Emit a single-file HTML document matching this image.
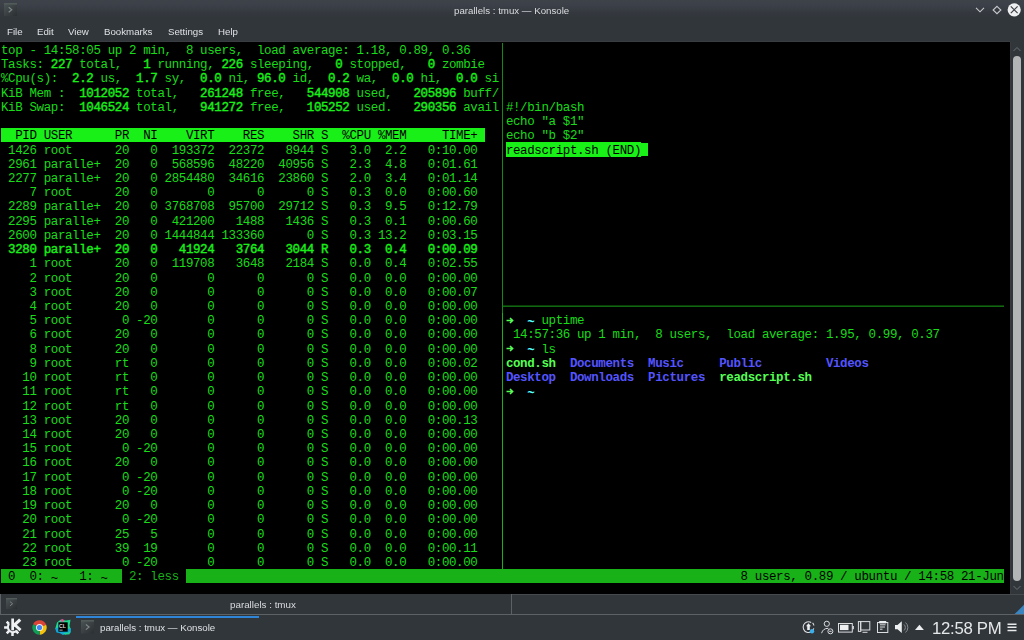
<!DOCTYPE html>
<html><head><meta charset="utf-8"><title>Konsole</title>
<style>
html,body{margin:0;padding:0;}
body{width:1024px;height:640px;overflow:hidden;position:relative;background:#31363b;font-family:"Liberation Sans",sans-serif;}
.abs{position:absolute;}
#term{position:absolute;left:0;top:42px;width:1010px;height:552px;background:#000;}
.t{position:absolute;white-space:pre;font-family:"Liberation Mono",monospace;font-size:12.5px;letter-spacing:-0.3900px;line-height:14.2222px;height:14.2222px;}
.f{color:#18dc18}
.fb{color:#18f018;-webkit-text-stroke:0.4px #18f018}
.p{color:#18dc18}
.pb{color:#18f018;-webkit-text-stroke:0.4px #18f018}
.h{color:#000}
.l{color:#18dc18}
.lh{color:#000}
.ex{color:#54ff54;font-weight:bold}
.dir{color:#5454ff;font-weight:bold}
.cy{color:#54ffff;font-weight:bold}
.sb{color:#000}
.sbt{color:#000}
.sc{color:#18b218}
.ui{position:absolute;white-space:pre;will-change:transform;color:#eff0f1;font-family:"Liberation Sans",sans-serif;}
</style></head><body>

<div class="abs" style="left:0;top:0;width:1024px;height:42px;background:linear-gradient(#3e434a 0px,#3c4048 5px,#34383e 13px,#31363b 18px)"></div>
<div class="abs" style="left:0;top:41px;width:1010px;height:1px;background:#393d42"></div>
<div class="abs" style="left:1010px;top:42px;width:1px;height:552px;background:#373b40"></div>
<div id="term"></div>
<div class="abs" style="left:1.00px;top:128.13px;width:483.55px;height:14.22px;background:#18f018"></div>
<div class="abs" style="left:505.89px;top:142.36px;width:135.11px;height:14.22px;background:#18f018"></div>
<div class="abs" style="left:641.00px;top:143.26px;width:7.11px;height:13.12px;background:#18f018"></div>
<div class="abs" style="left:1.00px;top:569.02px;width:120.89px;height:14.22px;background:#18b218"></div>
<div class="abs" style="left:185.89px;top:569.02px;width:817.78px;height:14.22px;background:#18b218"></div>
<div class="abs" style="left:502.00px;top:42.80px;width:1.00px;height:270.20px;background:#168816"></div>
<div class="abs" style="left:502.00px;top:313.00px;width:1.00px;height:256.02px;background:#18b218"></div>
<div class="abs" style="left:503.00px;top:305.00px;width:500.67px;height:1.00px;background:#0a3c0a"></div>
<div class="abs" style="left:503.00px;top:306.00px;width:500.67px;height:1.00px;background:#106810"></div>
<div class="t f" style="left:1.000px;top:44.050px">top - 14:58:05 up 2 min,  8 users,  load average: 1.18, 0.89, 0.36</div>
<div class="t f" style="left:1.000px;top:58.272px">Tasks: </div>
<div class="t fb" style="left:50.778px;top:58.272px">227</div>
<div class="t f" style="left:72.111px;top:58.272px"> total,   </div>
<div class="t fb" style="left:143.222px;top:58.272px">1</div>
<div class="t f" style="left:150.333px;top:58.272px"> running, </div>
<div class="t fb" style="left:221.444px;top:58.272px">226</div>
<div class="t f" style="left:242.777px;top:58.272px"> sleeping,   </div>
<div class="t fb" style="left:335.222px;top:58.272px">0</div>
<div class="t f" style="left:342.333px;top:58.272px"> stopped,   </div>
<div class="t fb" style="left:427.666px;top:58.272px">0</div>
<div class="t f" style="left:434.777px;top:58.272px"> zombie</div>
<div class="t f" style="left:1.000px;top:72.494px">%Cpu(s): </div>
<div class="t fb" style="left:65.000px;top:72.494px"> 2.2</div>
<div class="t f" style="left:93.444px;top:72.494px"> us, </div>
<div class="t fb" style="left:129.000px;top:72.494px"> 1.7</div>
<div class="t f" style="left:157.444px;top:72.494px"> sy, </div>
<div class="t fb" style="left:193.000px;top:72.494px"> 0.0</div>
<div class="t f" style="left:221.444px;top:72.494px"> ni, </div>
<div class="t fb" style="left:257.000px;top:72.494px">96.0</div>
<div class="t f" style="left:285.444px;top:72.494px"> id, </div>
<div class="t fb" style="left:321.000px;top:72.494px"> 0.2</div>
<div class="t f" style="left:349.444px;top:72.494px"> wa, </div>
<div class="t fb" style="left:384.999px;top:72.494px"> 0.0</div>
<div class="t f" style="left:413.444px;top:72.494px"> hi, </div>
<div class="t fb" style="left:448.999px;top:72.494px"> 0.0</div>
<div class="t f" style="left:477.444px;top:72.494px"> si</div>
<div class="t f" style="left:1.000px;top:86.717px">KiB Mem : </div>
<div class="t fb" style="left:72.111px;top:86.717px"> 1012052</div>
<div class="t f" style="left:129.000px;top:86.717px"> total, </div>
<div class="t fb" style="left:185.889px;top:86.717px">  261248</div>
<div class="t f" style="left:242.777px;top:86.717px"> free, </div>
<div class="t fb" style="left:292.555px;top:86.717px">  544908</div>
<div class="t f" style="left:349.444px;top:86.717px"> used, </div>
<div class="t fb" style="left:399.222px;top:86.717px">  205896</div>
<div class="t f" style="left:456.110px;top:86.717px"> buff/</div>
<div class="t f" style="left:1.000px;top:100.939px">KiB Swap: </div>
<div class="t fb" style="left:72.111px;top:100.939px"> 1046524</div>
<div class="t f" style="left:129.000px;top:100.939px"> total, </div>
<div class="t fb" style="left:185.889px;top:100.939px">  941272</div>
<div class="t f" style="left:242.777px;top:100.939px"> free, </div>
<div class="t fb" style="left:292.555px;top:100.939px">  105252</div>
<div class="t f" style="left:349.444px;top:100.939px"> used. </div>
<div class="t fb" style="left:399.222px;top:100.939px">  290356</div>
<div class="t f" style="left:456.110px;top:100.939px"> avail</div>
<div class="t l" style="left:505.888px;top:100.939px">#!/bin/bash</div>
<div class="t l" style="left:505.888px;top:115.161px">echo "a $1"</div>
<div class="t h" style="left:1.000px;top:129.383px">  PID USER      PR  NI    VIRT    RES    SHR S  %CPU %MEM     TIME+ </div>
<div class="t l" style="left:505.888px;top:129.383px">echo "b $2"</div>
<div class="t p" style="left:1.000px;top:143.605px"> 1426 root      20   0  193372  22372   8944 S   3.0  2.2   0:10.00</div>
<div class="t lh" style="left:505.888px;top:143.605px">readscript.sh (END)</div>
<div class="t p" style="left:1.000px;top:157.828px"> 2961 paralle+  20   0  568596  48220  40956 S   2.3  4.8   0:01.61</div>
<div class="t p" style="left:1.000px;top:172.050px"> 2277 paralle+  20   0 2854480  34616  23860 S   2.0  3.4   0:01.14</div>
<div class="t p" style="left:1.000px;top:186.272px">    7 root      20   0       0      0      0 S   0.3  0.0   0:00.60</div>
<div class="t p" style="left:1.000px;top:200.494px"> 2289 paralle+  20   0 3768708  95700  29712 S   0.3  9.5   0:12.79</div>
<div class="t p" style="left:1.000px;top:214.716px"> 2295 paralle+  20   0  421200   1488   1436 S   0.3  0.1   0:00.60</div>
<div class="t p" style="left:1.000px;top:228.939px"> 2600 paralle+  20   0 1444844 133360      0 S   0.3 13.2   0:03.15</div>
<div class="t pb" style="left:1.000px;top:243.161px"> 3280 paralle+  20   0   41924   3764   3044 R   0.3  0.4   0:00.09</div>
<div class="t p" style="left:1.000px;top:257.383px">    1 root      20   0  119708   3648   2184 S   0.0  0.4   0:02.55</div>
<div class="t p" style="left:1.000px;top:271.605px">    2 root      20   0       0      0      0 S   0.0  0.0   0:00.00</div>
<div class="t p" style="left:1.000px;top:285.827px">    3 root      20   0       0      0      0 S   0.0  0.0   0:00.07</div>
<div class="t p" style="left:1.000px;top:300.050px">    4 root      20   0       0      0      0 S   0.0  0.0   0:00.00</div>
<div class="t p" style="left:1.000px;top:314.272px">    5 root       0 -20       0      0      0 S   0.0  0.0   0:00.00</div>
<div class="t l" style="left:541.444px;top:314.272px">uptime</div>
<div class="t cy" style="left:527.221px;top:315.572px">~</div>
<div class="t p" style="left:1.000px;top:328.494px">    6 root      20   0       0      0      0 S   0.0  0.0   0:00.00</div>
<div class="t l" style="left:505.888px;top:328.494px"> 14:57:36 up 1 min,  8 users,  load average: 1.95, 0.99, 0.37</div>
<div class="t p" style="left:1.000px;top:342.716px">    8 root      20   0       0      0      0 S   0.0  0.0   0:00.00</div>
<div class="t l" style="left:541.444px;top:342.716px">ls</div>
<div class="t cy" style="left:527.221px;top:344.016px">~</div>
<div class="t p" style="left:1.000px;top:356.938px">    9 root      rt   0       0      0      0 S   0.0  0.0   0:00.02</div>
<div class="t ex" style="left:505.888px;top:356.938px">cond.sh</div>
<div class="t dir" style="left:569.888px;top:356.938px">Documents</div>
<div class="t dir" style="left:648.110px;top:356.938px">Music</div>
<div class="t dir" style="left:719.221px;top:356.938px">Public</div>
<div class="t dir" style="left:825.888px;top:356.938px">Videos</div>
<div class="t p" style="left:1.000px;top:371.161px">   10 root      rt   0       0      0      0 S   0.0  0.0   0:00.00</div>
<div class="t dir" style="left:505.888px;top:371.161px">Desktop</div>
<div class="t dir" style="left:569.888px;top:371.161px">Downloads</div>
<div class="t dir" style="left:648.110px;top:371.161px">Pictures</div>
<div class="t ex" style="left:719.221px;top:371.161px">readscript.sh</div>
<div class="t p" style="left:1.000px;top:385.383px">   11 root      rt   0       0      0      0 S   0.0  0.0   0:00.00</div>
<div class="t cy" style="left:527.221px;top:386.683px">~</div>
<div class="t p" style="left:1.000px;top:399.605px">   12 root      rt   0       0      0      0 S   0.0  0.0   0:00.00</div>
<div class="t p" style="left:1.000px;top:413.827px">   13 root      20   0       0      0      0 S   0.0  0.0   0:00.13</div>
<div class="t p" style="left:1.000px;top:428.049px">   14 root      20   0       0      0      0 S   0.0  0.0   0:00.00</div>
<div class="t p" style="left:1.000px;top:442.272px">   15 root       0 -20       0      0      0 S   0.0  0.0   0:00.00</div>
<div class="t p" style="left:1.000px;top:456.494px">   16 root      20   0       0      0      0 S   0.0  0.0   0:00.00</div>
<div class="t p" style="left:1.000px;top:470.716px">   17 root       0 -20       0      0      0 S   0.0  0.0   0:00.00</div>
<div class="t p" style="left:1.000px;top:484.938px">   18 root       0 -20       0      0      0 S   0.0  0.0   0:00.00</div>
<div class="t p" style="left:1.000px;top:499.160px">   19 root      20   0       0      0      0 S   0.0  0.0   0:00.00</div>
<div class="t p" style="left:1.000px;top:513.383px">   20 root       0 -20       0      0      0 S   0.0  0.0   0:00.00</div>
<div class="t p" style="left:1.000px;top:527.605px">   21 root      25   5       0      0      0 S   0.0  0.0   0:00.00</div>
<div class="t p" style="left:1.000px;top:541.827px">   22 root      39  19       0      0      0 S   0.0  0.0   0:00.11</div>
<div class="t p" style="left:1.000px;top:556.049px">   23 root       0 -20       0      0      0 S   0.0  0.0   0:00.00</div>
<div class="t sb" style="left:1.000px;top:570.271px"> 0  0:     1:    </div>
<div class="t sbt" style="left:50.778px;top:571.571px">~</div>
<div class="t sbt" style="left:100.555px;top:571.571px">~</div>
<div class="t sc" style="left:121.889px;top:570.271px"> 2: less </div>
<div class="t sb" style="left:740.554px;top:570.271px">8 users, 0.89 / ubuntu / 14:58 21-Jun</div>
<svg class="abs" style="left:505.89px;top:313.02px" width="8" height="14" viewBox="0 0 8 14"><path d="M0.5 7.5H6.5M4 5L6.6 7.5L4 10" stroke="#54ff54" stroke-width="1.6" fill="none"/></svg>
<svg class="abs" style="left:505.89px;top:341.47px" width="8" height="14" viewBox="0 0 8 14"><path d="M0.5 7.5H6.5M4 5L6.6 7.5L4 10" stroke="#54ff54" stroke-width="1.6" fill="none"/></svg>
<svg class="abs" style="left:505.89px;top:384.13px" width="8" height="14" viewBox="0 0 8 14"><path d="M0.5 7.5H6.5M4 5L6.6 7.5L4 10" stroke="#54ff54" stroke-width="1.6" fill="none"/></svg>
<div class="abs" style="left:1013px;top:56px;width:8px;height:525px;border-radius:4px;background:#b3b4b6"></div>
<svg class="abs" style="left:1012px;top:45px" width="10" height="8" viewBox="0 0 10 8"><path d="M1.5 6L5 2.5L8.5 6" stroke="#6b6f74" stroke-width="1" fill="none"/></svg>
<svg class="abs" style="left:1012px;top:584px" width="10" height="8" viewBox="0 0 10 8"><path d="M1.5 2L5 5.5L8.5 2" stroke="#6b6f74" stroke-width="1" fill="none"/></svg>
<div class="ui" style="left:454px;top:4.5px;font-size:9.7px;color:#dadcde">parallels : tmux — Konsole</div>
<svg class="abs" style="left:3.50px;top:3.20px" width="13.00" height="13.00" viewBox="0 0 13 13"><defs><linearGradient id="kg3" x1="0" y1="0" x2="1" y2="1"><stop offset="0" stop-color="#4d5555"/><stop offset="1" stop-color="#2a2e31"/></linearGradient></defs><rect x="0" y="0" width="13" height="13" fill="url(#kg3)"/><rect x="0" y="0" width="13" height="1.6" fill="#525a5a"/><path d="M4.7 4.3L7.8 6.8L4.7 9.3" stroke="#80888a" stroke-width="1.1" fill="none"/></svg>
<svg class="abs" style="left:970px;top:0" width="54" height="20" viewBox="0 0 54 20"><path d="M6 7.8L10 11.8L14 7.8" stroke="#c8c9cb" stroke-width="1.1" fill="none"/><path d="M27 6.3L30.9 10L27 13.7L23.1 10Z" stroke="#c8c9cb" stroke-width="1.1" fill="none"/><circle cx="44.2" cy="9.8" r="6.6" fill="#eeeff0"/><path d="M40.8 6.4L47.6 13.2M47.6 6.4L40.8 13.2" stroke="#3b3f44" stroke-width="1.2"/></svg>
<div class="ui" style="left:7px;top:25.8px;font-size:9.7px;color:#dfe1e3">File</div>
<div class="ui" style="left:37px;top:25.8px;font-size:9.7px;color:#dfe1e3">Edit</div>
<div class="ui" style="left:68px;top:25.8px;font-size:9.7px;color:#dfe1e3">View</div>
<div class="ui" style="left:104px;top:25.8px;font-size:9.7px;color:#dfe1e3">Bookmarks</div>
<div class="ui" style="left:168px;top:25.8px;font-size:9.7px;color:#dfe1e3">Settings</div>
<div class="ui" style="left:218px;top:25.8px;font-size:9.7px;color:#dfe1e3">Help</div>
<div class="abs" style="left:0;top:594px;width:1024px;height:21px;background:#31363b"></div>
<div class="abs" style="left:512px;top:594px;width:512px;height:1px;background:#464a4f"></div>
<div class="abs" style="left:0;top:594px;width:1px;height:21px;background:#5c6166"></div>
<div class="abs" style="left:511px;top:594px;width:1px;height:21px;background:#5c6166"></div>
<div class="abs" style="left:0;top:614px;width:1024px;height:1px;background:#5e6266"></div>
<svg class="abs" style="left:6.00px;top:598.00px" width="11.00" height="11.00" viewBox="0 0 13 13"><defs><linearGradient id="kg6" x1="0" y1="0" x2="1" y2="1"><stop offset="0" stop-color="#4d5555"/><stop offset="1" stop-color="#2a2e31"/></linearGradient></defs><rect x="0" y="0" width="13" height="13" fill="url(#kg6)"/><rect x="0" y="0" width="13" height="1.6" fill="#525a5a"/><path d="M4.7 4.3L7.8 6.8L4.7 9.3" stroke="#80888a" stroke-width="1.1" fill="none"/></svg>
<div class="ui" style="left:230px;top:599px;font-size:9.8px;color:#dadcde">parallels : tmux</div>
<svg class="abs" style="left:1014px;top:604px" width="10" height="10" viewBox="0 0 10 10"><path d="M0.6 10L10 0.8L10 10Z" fill="#3a85c0"/></svg>
<div class="abs" style="left:76px;top:616px;width:183px;height:2px;background:#2f86d9"></div>
<svg class="abs" style="left:0;top:614px" width="26" height="26" viewBox="0 614 26 26"><g stroke="#eff0f1" fill="none"><path d="M16.9 630.3A4.9 4.9 0 1 1 9.0 623.9" stroke-width="2.1"/><path d="M16.0 631.0L18.3 633.3M12.5 632.5L12.5 635.9M9.0 631.0L6.7 633.3M7.5 627.5L4.1 627.5M9.0 624.0L6.7 621.7" stroke-width="2.5"/><path d="M13.4 625.9L20.2 619.6" stroke-width="3.2"/><path d="M14.4 624.5L20.5 630.1" stroke-width="2.9"/></g><g fill="#eff0f1"><rect x="11.3" y="618.5" width="2.7" height="11.8"/></g></svg>
<svg class="abs" style="left:30.7px;top:618.7px" width="17" height="17" viewBox="-8.5 -8.5 17 17"><path d="M0 0L-6.42 -3.27 A7.2 7.2 0 0 1 6.63 -2.81Z" fill="#db4437"/><path d="M0 0L6.63 -2.81 A7.2 7.2 0 0 1 0.25 7.20Z" fill="#f4c20d"/><path d="M0 0L0.25 7.20 A7.2 7.2 0 0 1 -6.42 -3.27Z" fill="#0f9d58"/><circle r="3.5" fill="#f1f1f1"/><circle r="2.6" fill="#4285f4"/></svg>
<svg class="abs" style="left:54px;top:618px" width="18" height="18" viewBox="0 0 18 18"><path d="M3 4.5L6.5 1.8L12 2.5L16.5 1.8L15.5 8L17 11.5L12 12L5 10.5L1.2 11Z" fill="#22d88f"/><path d="M1.2 10.5L5 9.5L13 11L17 10.5L16.5 15L12 15.8L9 17L6 15.3L2.5 14.5Z" fill="#13a6d8"/><path d="M9 15L14.5 14.5L16.8 12.2L15.5 16.2L11 16.8Z" fill="#1fd395"/><circle cx="8.3" cy="2.6" r="1.5" fill="#ec4f95"/><rect x="4.4" y="4.3" width="9.3" height="9.4" fill="#000"/><text x="5.1" y="9.8" font-family="Liberation Sans" font-weight="bold" font-size="5.2" fill="#dedede">CL</text><rect x="5.4" y="11.7" width="3.2" height="0.8" fill="#dedede"/></svg>
<svg class="abs" style="left:80.70px;top:620.00px" width="13.50" height="13.50" viewBox="0 0 13 13"><defs><linearGradient id="kg80" x1="0" y1="0" x2="1" y2="1"><stop offset="0" stop-color="#4d5555"/><stop offset="1" stop-color="#2a2e31"/></linearGradient></defs><rect x="0" y="0" width="13" height="13" fill="url(#kg80)"/><rect x="0" y="0" width="13" height="1.6" fill="#525a5a"/><path d="M4.7 4.3L7.8 6.8L4.7 9.3" stroke="#80888a" stroke-width="1.1" fill="none"/></svg>
<div class="ui" style="left:100px;top:622px;font-size:9.7px;color:#dfe1e3">parallels : tmux — Konsole</div>
<svg class="abs" style="left:798px;top:616px" width="130" height="22" viewBox="798 616 130 22"><g fill="none" stroke="#dcdddf" stroke-width="1"><path d="M811.2 622.4A5.4 5.4 0 1 0 813.8 628.4" stroke-width="1.1"/><path d="M812.6 622.9A5.4 5.4 0 0 1 813.9 625.5" stroke-width="1.1"/><circle cx="826.8" cy="623.8" r="2.6"/><path d="M821.6 633.2C822.5 630 824.5 628.3 828.3 628.3"/><circle cx="830.4" cy="631.3" r="2.5"/><path d="M829.2 631.3H831.6"/><rect x="838.5" y="623.5" width="13.8" height="8.6"/><rect x="860.6" y="621.6" width="9.2" height="8.4"/><rect x="858.4" y="621.6" width="2.4" height="9.8"/><path d="M862.5 632.3H867.5"/><rect x="877.5" y="622.5" width="10.3" height="10"/><path d="M880 624.8H885.5M880 627H885M880 629.2H882.5"/><path d="M904 624.5A4 4 0 0 1 904 630.5M905.5 622.5A6.5 6.5 0 0 1 905.5 632.5" stroke="#8a8c8f"/></g><g fill="#eceeef"><path d="M808.5 623.3L811 626.2H809.8V630H807.2V626.2H806Z"/><rect x="840" y="624.8" width="8.5" height="5.3"/><rect x="852.6" y="626" width="1.2" height="3.2"/><rect x="879.2" y="621" width="7" height="2.4"/><path d="M895 625H897.5L901.8 621.2V633L897.5 629.2H895Z"/><path d="M915 630L919.4 624.8L923.9 630Z"/></g><circle cx="812" cy="631.3" r="2.2" fill="#3daee9"/></svg>
<div class="ui" style="left:931.5px;top:618.6px;font-size:16.8px;letter-spacing:-0.3px;color:#e6e7e8">12:58 PM</div>
<svg class="abs" style="left:1007px;top:623px" width="10" height="9" viewBox="0 0 10 9"><path d="M0.5 1.2H9.5M0.5 4.3H9.5M0.5 7.4H9.5" stroke="#e8e9ea" stroke-width="1.5"/></svg>
</body></html>
